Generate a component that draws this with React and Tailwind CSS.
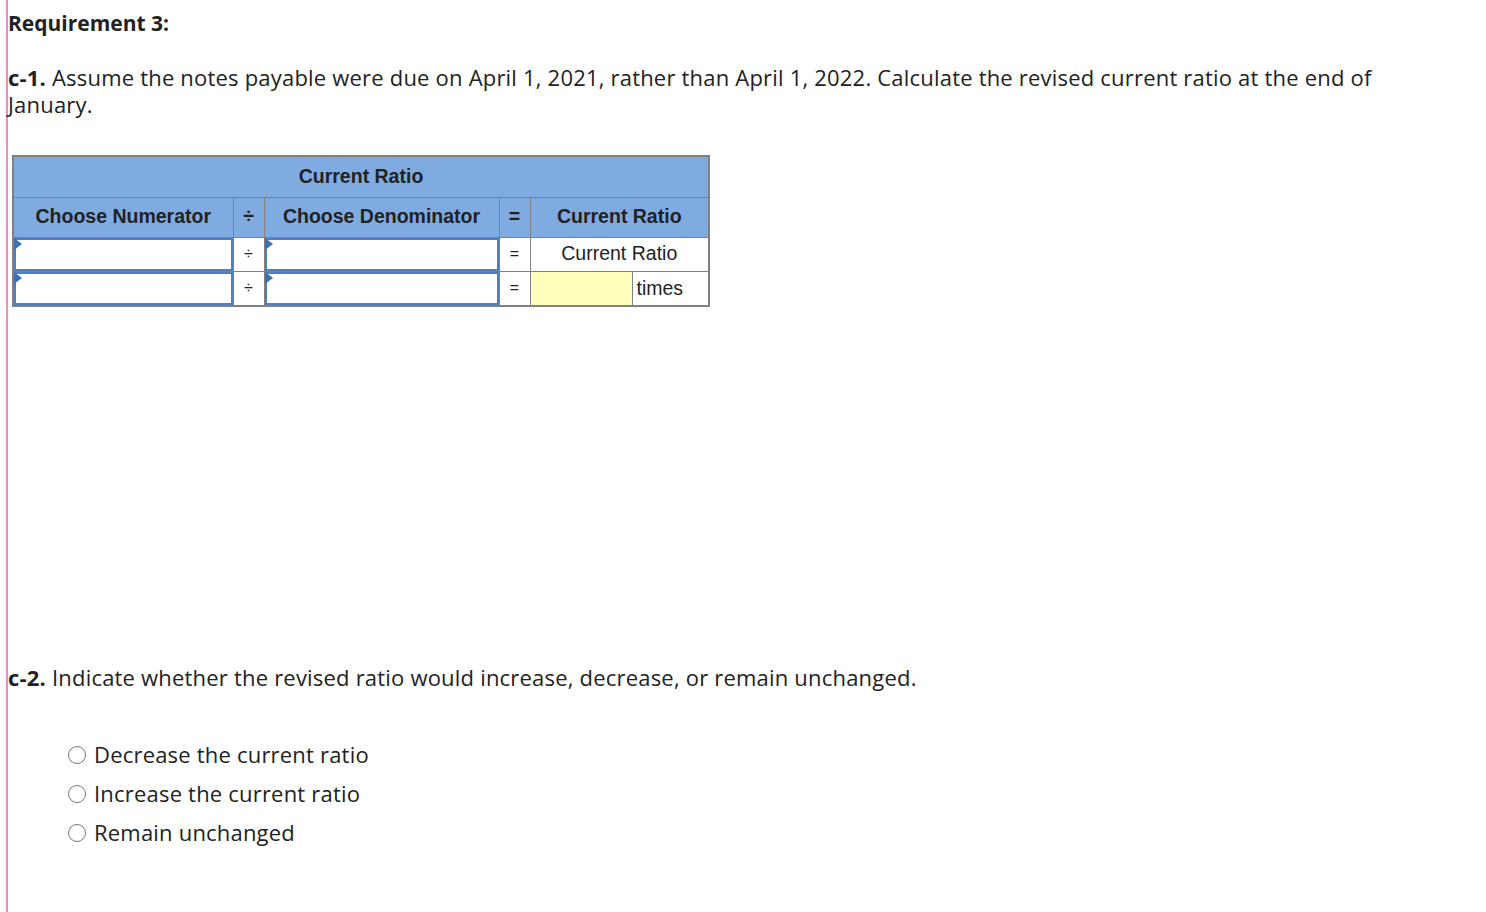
import React from 'react';

const InputCell = () => (
    <div className="relative h-full w-full border-2 border-[#4f7fbf] bg-white">
        <span className="absolute -left-[2px] -top-[2px] h-0 w-0 border-y-[6px] border-l-[8px] border-y-transparent border-l-[#3b6fb6]" />
    </div>
);

const Radio = ({ label }) => (
    <label className="flex items-center gap-[8px] h-[39px]">
        <span className="h-[18px] w-[18px] rounded-full border border-[#777] bg-white" />
        <span>{label}</span>
    </label>
);

export default function App() {
    return (
        <div className="min-h-[912px] bg-white">
            <div className="ml-[6px] min-h-[912px] border-l-2 border-[#ee8fbb] text-[#222] font-['Open_Sans','Lato',sans-serif] text-[22px] tracking-[0.2px]">
                <h2 className="pt-[10px] leading-[27px] font-bold text-[21px] tracking-normal">Requirement 3:</h2>

                <p className="mt-[27px] leading-[27px] max-w-[1380px]">
                    <b>c-1.</b> Assume the notes payable were due on April 1, 2021, rather than April 1, 2022. Calculate the revised current ratio at the end of January.
                </p>

                <div className="mt-[37px] ml-[4px] tracking-normal">
                    <table className="border-collapse border-2 border-[#808080] font-['Liberation_Sans',Arial,sans-serif] text-[19.5px] text-[#222]">
                        <thead>
                            <tr className="h-[41px] bg-[#80abe0]">
                                <th colSpan={6} className="border border-[#808080] font-bold">Current Ratio</th>
                            </tr>
                            <tr className="h-[40px] bg-[#80abe0]">
                                <th className="w-[220px] border border-[#808080] font-bold">Choose Numerator</th>
                                <th className="w-[31px] border border-[#808080] font-bold">÷</th>
                                <th className="w-[235px] border border-[#808080] font-bold">Choose Denominator</th>
                                <th className="w-[31px] border border-[#808080] font-bold">=</th>
                                <th className="w-[179px] border border-[#808080] font-bold" colSpan={2}>Current Ratio</th>
                            </tr>
                        </thead>
                        <tbody>
                            <tr className="h-[34px]">
                                <td className="h-[34px] border border-[#808080] p-0"><InputCell /></td>
                                <td className="border border-[#808080] text-center text-[16px]">÷</td>
                                <td className="h-[34px] border border-[#808080] p-0"><InputCell /></td>
                                <td className="border border-[#808080] text-center text-[16px]">=</td>
                                <td colSpan={2} className="border border-[#808080] text-center">Current Ratio</td>
                            </tr>
                            <tr className="h-[35px]">
                                <td className="h-[35px] border border-[#808080] p-0"><InputCell /></td>
                                <td className="border border-[#808080] text-center text-[16px]">÷</td>
                                <td className="h-[35px] border border-[#808080] p-0"><InputCell /></td>
                                <td className="border border-[#808080] text-center text-[16px]">=</td>
                                <td className="w-[102px] border border-[#808080] bg-[#ffffbb]"></td>
                                <td className="w-[77px] border border-[#808080] pl-[4px] text-left">times</td>
                            </tr>
                        </tbody>
                    </table>
                </div>

                <p className="mt-[357px] leading-[27px]">
                    <b>c-2.</b> Indicate whether the revised ratio would increase, decrease, or remain unchanged.
                </p>

                <div className="mt-[44px] ml-[60px] flex flex-col">
                    <Radio label="Decrease the current ratio" />
                    <Radio label="Increase the current ratio" />
                    <Radio label="Remain unchanged" />
                </div>
            </div>
        </div>
    );
}
